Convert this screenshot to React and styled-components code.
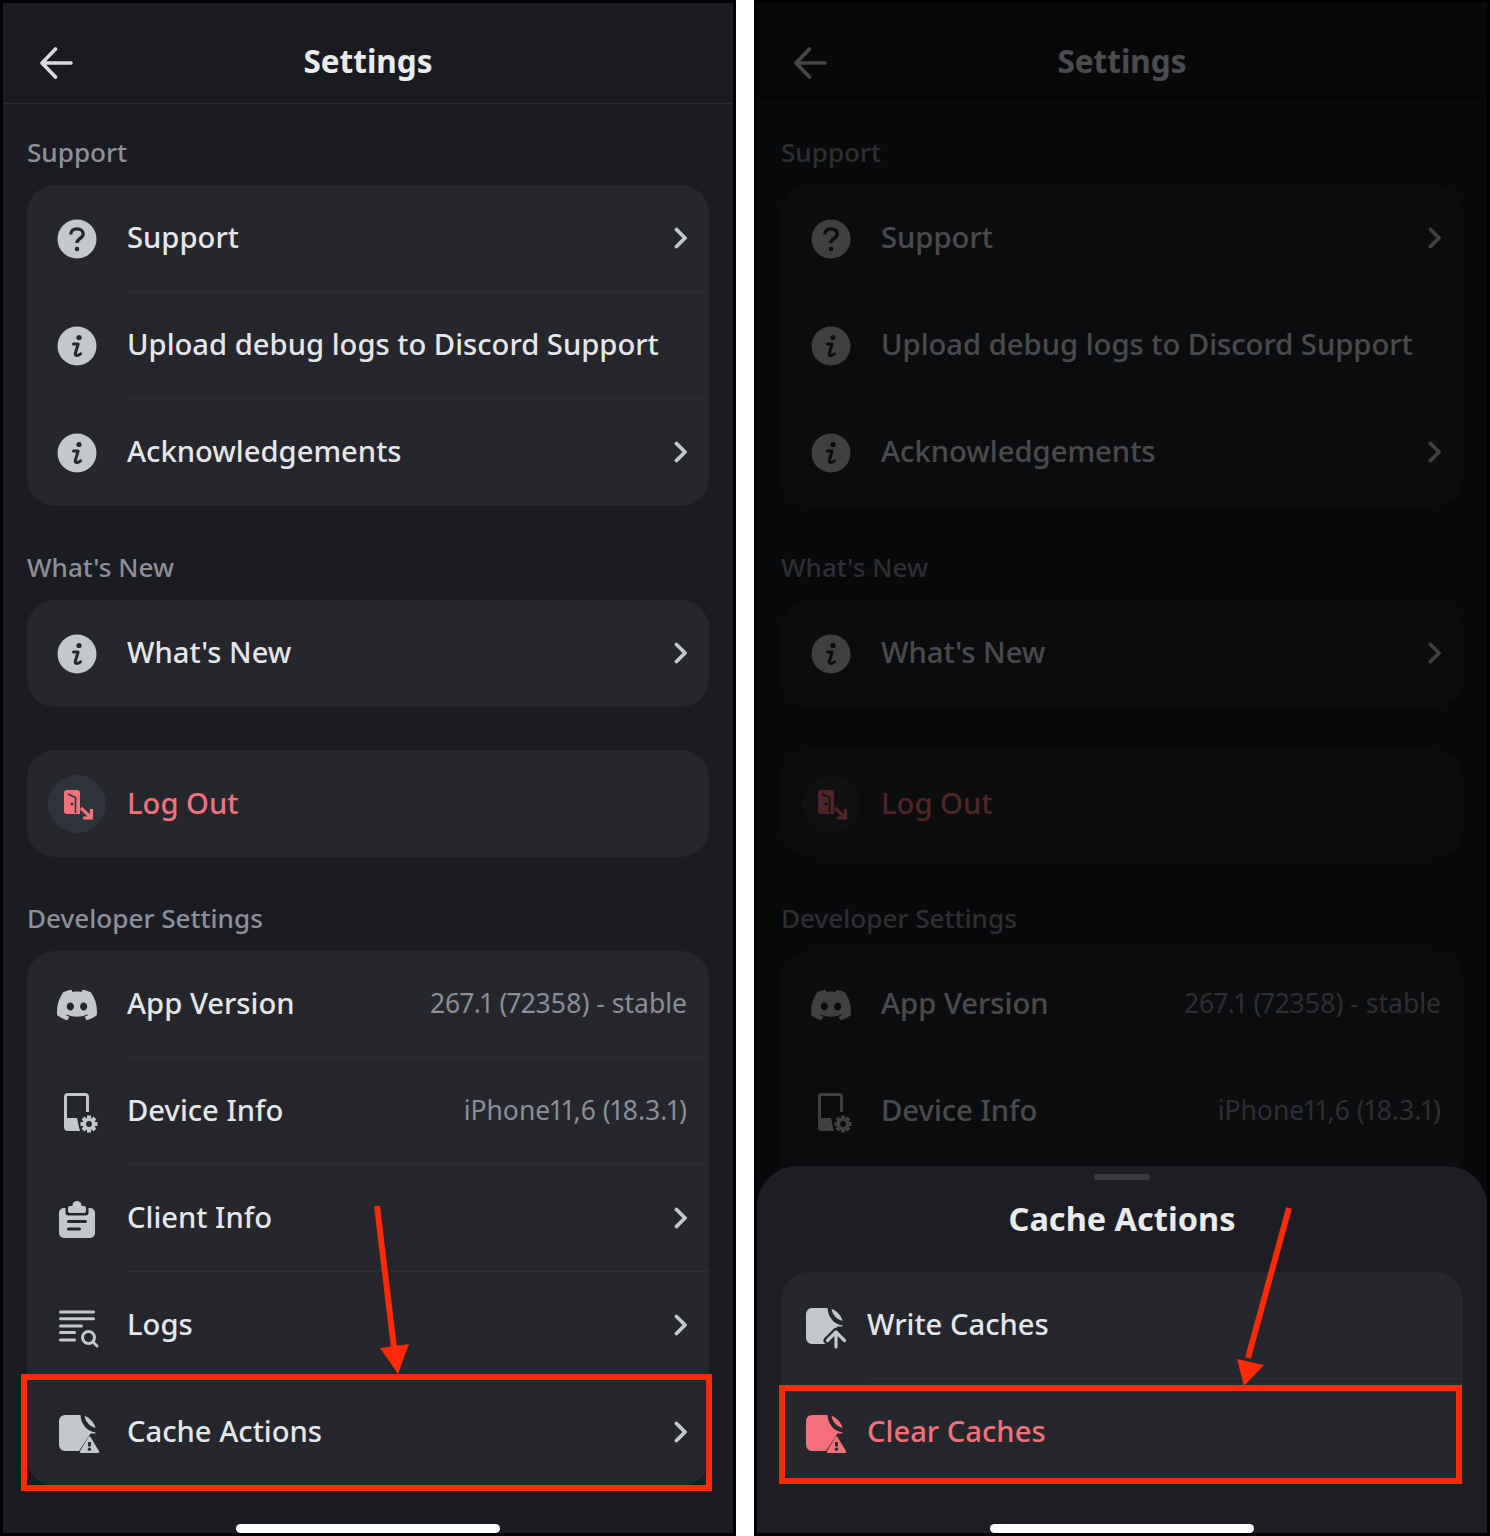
import React from 'react';
import styled, { createGlobalStyle } from 'styled-components';
import { SiDiscord } from 'react-icons/si';

const ICON = '#c4c7cc';
const RED = '#f4717c';
const CARD = '#25272c';
const CIRCLE = '#30323a';

const GlobalStyle = createGlobalStyle`
	html, body {
		margin: 0;
		padding: 0;
		background: #fff;
	}
	* {
		box-sizing: border-box;
	}
`;

const Page = styled.div`
	width: 1490px;
	height: 1536px;
	display: flex;
	justify-content: space-between;
	font-family: 'Noto Sans', 'Open Sans', sans-serif;
	font-variant-numeric: proportional-nums;
`;

const Screen = styled.div`
	position: relative;
	width: 736px;
	height: 1536px;
	border: 3px solid #000;
	background: #1a1c21;
	overflow: hidden;
`;

const Header = styled.header`
	height: 101px;
	padding: 18px 37px 0;
	display: grid;
	grid-template-columns: 1fr auto 1fr;
	align-items: center;
	border-bottom: 1px solid #2a2c32;
	background: #191b20;
	svg {
		margin-top: 2px;
	}
`;

const Title = styled.h1`
	margin: 0;
	height: 46px;
	color: #e9ebee;
	font-size: 31.5px;
	font-weight: 700;
	line-height: 44px;
`;

const Content = styled.main`
	padding: 30px 24px 0;
`;

const SectionLabel = styled.div`
	height: 36px;
	margin-bottom: 15px;
	color: #8d9098;
	font-size: 26.1px;
	font-weight: 500;
	line-height: 36px;
`;

const Card = styled.section`
	margin-bottom: 43px;
	background: ${CARD};
	border-radius: 28px;
	overflow: hidden;
`;

const Row = styled.div`
	height: 107px;
	padding-left: ${p => p.$inset || 30}px;
	display: flex;
	align-items: center;
	gap: ${p => p.$gap || 30}px;
`;

const CoveredRows = styled.div`
	height: 321px;
`;

const IconBox = styled.div`
	flex: 0 0 40px;
	width: 40px;
	height: 40px;
	display: flex;
	align-items: center;
	justify-content: center;
	color: ${p => p.$color || ICON};
	svg {
		display: block;
		overflow: visible;
	}
`;

const IconCircle = styled.div`
	flex: 0 0 58px;
	width: 58px;
	height: 58px;
	border-radius: 50%;
	background: ${CIRCLE};
`;

const RowBody = styled.div`
	flex: 1;
	height: 100%;
	padding-right: 22px;
	display: flex;
	align-items: center;
	justify-content: space-between;
	border-bottom: 1px solid ${p => (p.$last ? 'transparent' : '#2e3036')};
`;

const RowLabel = styled.span`
	height: 40px;
	color: ${p => p.$color || '#e4e6ea'};
	font-size: 29.2px;
	font-weight: 500;
	line-height: 38px;
`;

const RowValue = styled.span`
	height: 40px;
	color: #8b8e96;
	font-size: 26.5px;
	font-weight: 400;
	line-height: 38px;
`;

const HomeBar = styled.div`
	position: absolute;
	left: 233px;
	bottom: 0;
	width: 264px;
	height: 9px;
	border-radius: 5px;
	background: #fff;
	z-index: 5;
`;

const Dim = styled.div`
	position: absolute;
	inset: 0;
	background: rgba(0, 0, 0, 0.68);
`;

const Sheet = styled.aside`
	position: absolute;
	left: 0;
	right: 0;
	bottom: 0;
	height: 367px;
	padding: 8px 24px 0;
	background: #1c1e23;
	border-radius: 40px 40px 0 0;
	display: flex;
	flex-direction: column;
	align-items: center;
`;

const Handle = styled.div`
	width: 56px;
	height: 6px;
	border-radius: 3px;
	background: #3a3c42;
`;

const SheetTitle = styled(Title)`
	margin: 17px 0 29px;
	font-size: 32.5px;
`;

const SheetCard = styled(Card)`
	width: 100%;
	height: 212px;
	margin: 0;
	border-radius: 28px 28px 0 0;
`;

const RedBox = styled.div`
	position: absolute;
	left: ${p => p.$x}px;
	top: ${p => p.$y}px;
	width: ${p => p.$w}px;
	height: ${p => p.$h}px;
	border: 6px solid #ff2a08;
	z-index: 3;
`;

const ArrowLayer = styled.svg`
	position: absolute;
	left: 0;
	top: 0;
	width: 730px;
	height: 1530px;
	z-index: 4;
	pointer-events: none;
`;

const BackArrow = () => (
	<svg width="33" height="32" viewBox="0 0 33 32" fill="none" stroke="#d8dade" strokeWidth="3.6" strokeLinecap="round" strokeLinejoin="round">
		<path d="M31 16H3M15.5 2L2 16l13.5 14" />
	</svg>
);

const Chevron = () => (
	<svg width="13" height="22" viewBox="0 0 13 22" fill="none" stroke="#c4c7cc" strokeWidth="3.8" strokeLinecap="round" strokeLinejoin="round">
		<path d="M2.5 2.5l8.5 8.5-8.5 8.5" />
	</svg>
);

const QuestionIcon = () => (
	<svg width="40" height="40" viewBox="0 0 40 40">
		<circle cx="20" cy="20" r="19.5" fill="currentColor" />
		<path d="M13.8 15.5c0-3.6 2.7-5.7 6.2-5.7s6.2 2 6.2 5.1c0 4.6-6.2 4.4-6.2 9" fill="none" stroke={CARD} strokeWidth="3.3" />
		<circle cx="20" cy="30" r="2.3" fill={CARD} />
	</svg>
);

const InfoIcon = () => (
	<svg width="40" height="40" viewBox="0 0 40 40">
		<circle cx="20" cy="20" r="19.5" fill="currentColor" />
		<circle cx="22" cy="11.5" r="2.6" fill={CARD} />
		<path d="M16.5 18h4.6l-2.8 9.4c-.6 2.4 2.2 2.8 5.2.4" fill="none" stroke={CARD} strokeWidth="3" strokeLinecap="round" strokeLinejoin="round" />
	</svg>
);

const DeviceIcon = () => (
	<svg width="40" height="40" viewBox="0 0 40 40">
		<path fill="currentColor" d="M11 1H28a4 4 0 0 1 4 4V20H29V4H10V26H20L23 39H11a4 4 0 0 1-4-4V5a4 4 0 0 1 4-4Z" />
		<circle cx="32" cy="32" r="10.5" fill={CARD} />
		{[0, 45, 90, 135, 180, 225, 270, 315].map(a => (
			<rect key={a} x="30" y="23.5" width="4" height="5" fill="currentColor" transform={`rotate(${a} 32 32)`} />
		))}
		<circle cx="32" cy="32" r="4.6" fill="none" stroke="currentColor" strokeWidth="3.4" />
	</svg>
);

const ClipboardIcon = () => (
	<svg width="40" height="40" viewBox="0 0 40 40">
		<rect x="2" y="9" width="36" height="30" rx="5" fill="currentColor" />
		<rect x="8.5" y="4" width="23" height="12.5" rx="3" fill={CARD} />
		<rect x="11" y="7" width="18" height="7" rx="2" fill="currentColor" />
		<circle cx="20" cy="6.5" r="4.5" fill="currentColor" />
		<path d="M11.5 22.5h17M11.5 30h11" stroke={CARD} strokeWidth="3" strokeLinecap="round" />
	</svg>
);

const LogsIcon = () => (
	<svg width="40" height="40" viewBox="0 0 40 40" fill="none" stroke="currentColor" strokeWidth="3" strokeLinecap="round">
		<path d="M3.5 6h33M3.5 12.7h33M3.5 20h21M3.5 26.5h14M3.5 34h14" />
		<circle cx="31.5" cy="31.5" r="6" />
		<path d="M36 36l4 4" />
	</svg>
);

const FileBase = () => (
	<>
		<path fill="currentColor" d="M8 2H23.5C24 11 30 18.5 38.5 19.5V20.5H33.5L22 38H8a6 6 0 0 1-6-6V8a6 6 0 0 1 6-6Z" />
		<path fill="currentColor" d="M27.5 3C32 4 37 9 38.5 15 33 13.5 28.5 9 27.5 3Z" />
	</>
);

const FileWarnIcon = () => (
	<svg width="40" height="40" viewBox="0 0 40 40">
		<FileBase />
		<path fill="currentColor" stroke="currentColor" strokeWidth="2.4" strokeLinejoin="round" d="M32.5 24.5L41 38.8H24Z" />
		<path d="M32.5 29v4.5" stroke={CARD} strokeWidth="2.8" />
		<circle cx="32.5" cy="36.2" r="1.6" fill={CARD} />
	</svg>
);

const FileUploadIcon = () => (
	<svg width="40" height="40" viewBox="0 0 40 40">
		<FileBase />
		<path d="M32 42V28M23.5 34.5L32 26l8.5 8.5" fill="none" stroke={CARD} strokeWidth="8" strokeLinecap="round" strokeLinejoin="round" />
		<path d="M32 41V28M23.5 34.5L32 26l8.5 8.5" fill="none" stroke="currentColor" strokeWidth="3.2" strokeLinecap="round" strokeLinejoin="round" />
	</svg>
);

const LogoutIcon = () => (
	<svg width="58" height="58" viewBox="0 0 58 58">
		<path d="M19 15H29a3 3 0 0 1 3 3V39H19a3 3 0 0 1-3-3V18a3 3 0 0 1 3-3Z" fill={RED} />
		<path d="M20 19l7.5 3.5V38" fill="none" stroke={CIRCLE} strokeWidth="1.6" />
		<circle cx="24" cy="29" r="1.5" fill={CIRCLE} />
		<path d="M33 33l10 9.5M43.5 34v9H35" fill="none" stroke={RED} strokeWidth="3.2" />
	</svg>
);

const SettingsRow = ({ icon, label, value, chevron, last }) => (
	<Row>
		<IconBox>{icon}</IconBox>
		<RowBody $last={last}>
			<RowLabel>{label}</RowLabel>
			{value && <RowValue>{value}</RowValue>}
			{chevron && <Chevron />}
		</RowBody>
	</Row>
);

const LogoutRow = styled(Row)`
	padding-left: 21px;
	gap: 21px;
`;

// rows behind the bottom sheet are never visible, so `covered` swaps them for a spacer
const SettingsList = ({ covered }) => (
	<>
		<Header>
			<BackArrow />
			<Title>Settings</Title>
		</Header>
		<Content>
			<SectionLabel>Support</SectionLabel>
			<Card>
				<SettingsRow icon={<QuestionIcon />} label="Support" chevron />
				<SettingsRow icon={<InfoIcon />} label="Upload debug logs to Discord Support" />
				<SettingsRow icon={<InfoIcon />} label="Acknowledgements" chevron last />
			</Card>
			<SectionLabel>What's New</SectionLabel>
			<Card>
				<SettingsRow icon={<InfoIcon />} label="What's New" chevron last />
			</Card>
			<Card>
				<LogoutRow>
					<IconCircle><LogoutIcon /></IconCircle>
					<RowLabel $color={RED}>Log Out</RowLabel>
				</LogoutRow>
			</Card>
			<SectionLabel>Developer Settings</SectionLabel>
			<Card>
				<SettingsRow icon={<SiDiscord size={40} />} label="App Version" value="267.1 (72358) - stable" />
				<SettingsRow icon={<DeviceIcon />} label="Device Info" value="iPhone11,6 (18.3.1)" />
				{covered ? <CoveredRows /> : (
					<>
						<SettingsRow icon={<ClipboardIcon />} label="Client Info" chevron />
						<SettingsRow icon={<LogsIcon />} label="Logs" chevron />
						<SettingsRow icon={<FileWarnIcon />} label="Cache Actions" chevron last />
					</>
				)}
			</Card>
		</Content>
	</>
);

const App = () => (
	<Page>
		<GlobalStyle />
		<Screen>
			<SettingsList />
			<RedBox $x={18} $y={1371} $w={691} $h={117} />
			<ArrowLayer viewBox="0 0 730 1530">
				<path d="M374 1203l17.5 146" fill="none" stroke="#ff2a08" strokeWidth="6" />
				<path d="M377 1345l29-4-11 30Z" fill="#ff2a08" />
			</ArrowLayer>
			<HomeBar />
		</Screen>
		<Screen>
			<SettingsList covered />
			<Dim />
			<Sheet>
				<Handle />
				<SheetTitle>Cache Actions</SheetTitle>
				<SheetCard>
					<Row $inset={23} $gap={23}>
						<IconBox><FileUploadIcon /></IconBox>
						<RowBody>
							<RowLabel>Write Caches</RowLabel>
						</RowBody>
					</Row>
					<Row $inset={23} $gap={23}>
						<IconBox $color={RED}><FileWarnIcon /></IconBox>
						<RowBody $last>
							<RowLabel $color={RED}>Clear Caches</RowLabel>
						</RowBody>
					</Row>
				</SheetCard>
			</Sheet>
			<RedBox $x={22} $y={1382} $w={683} $h={99} />
			<ArrowLayer viewBox="0 0 730 1530">
				<path d="M532 1205l-41 150" fill="none" stroke="#ff2a08" strokeWidth="6" />
				<path d="M480 1356l27 6-20 21Z" fill="#ff2a08" />
			</ArrowLayer>
			<HomeBar />
		</Screen>
	</Page>
);

export default App;
